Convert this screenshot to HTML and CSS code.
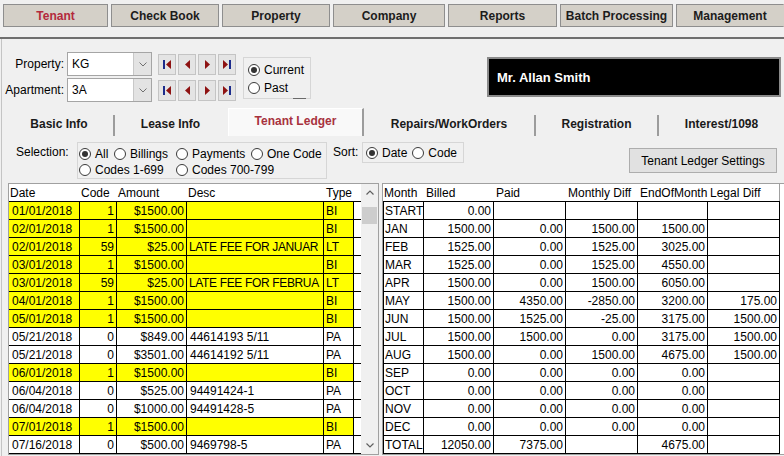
FILE: index.html
```html
<!DOCTYPE html>
<html>
<head>
<meta charset="utf-8">
<title>Tenant Ledger</title>
<link rel="stylesheet" href="styles.css">
</head>
<body>
<nav class="topnav">
  <div class="nb nb-active">Tenant</div>
  <div class="nb">Check Book</div>
  <div class="nb">Property</div>
  <div class="nb">Company</div>
  <div class="nb">Reports</div>
  <div class="nb">Batch Processing</div>
  <div class="nb nb-last">Management</div>
</nav>
<div class="main">
  <div class="head">
    <div class="fields">
      <div class="frow">
        <span class="flabel">Property:</span>
        <div class="combo"><span class="combo-val">KG</span><span class="combo-btn"><svg width="8" height="5" viewBox="0 0 8 5"><path d="M0.5 0.5 L4 4 L7.5 0.5" fill="none" stroke="#707070" stroke-width="1"/></svg></span></div>
        <div class="navbtns">
          <span class="nav"><svg width="8" height="9" viewBox="0 0 8 9"><rect width="2" height="9" fill="#1c2c8c"/><path d="M8 0V9L3 4.5Z" fill="#8e1212"/></svg></span>
          <span class="nav"><svg width="5" height="9" viewBox="0 0 5 9"><path d="M5 0V9L0 4.5Z" fill="#8e1212"/></svg></span>
          <span class="nav"><svg width="5" height="9" viewBox="0 0 5 9"><path d="M0 0V9L5 4.5Z" fill="#8e1212"/></svg></span>
          <span class="nav"><svg width="8" height="9" viewBox="0 0 8 9"><path d="M0 0V9L5 4.5Z" fill="#8e1212"/><rect x="6" width="2" height="9" fill="#1c2c8c"/></svg></span>
        </div>
      </div>
      <div class="frow">
        <span class="flabel">Apartment:</span>
        <div class="combo"><span class="combo-val">3A</span><span class="combo-btn"><svg width="8" height="5" viewBox="0 0 8 5"><path d="M0.5 0.5 L4 4 L7.5 0.5" fill="none" stroke="#707070" stroke-width="1"/></svg></span></div>
        <div class="navbtns">
          <span class="nav"><svg width="8" height="9" viewBox="0 0 8 9"><rect width="2" height="9" fill="#1c2c8c"/><path d="M8 0V9L3 4.5Z" fill="#8e1212"/></svg></span>
          <span class="nav"><svg width="5" height="9" viewBox="0 0 5 9"><path d="M5 0V9L0 4.5Z" fill="#8e1212"/></svg></span>
          <span class="nav"><svg width="5" height="9" viewBox="0 0 5 9"><path d="M0 0V9L5 4.5Z" fill="#8e1212"/></svg></span>
          <span class="nav"><svg width="8" height="9" viewBox="0 0 8 9"><path d="M0 0V9L5 4.5Z" fill="#8e1212"/><rect x="6" width="2" height="9" fill="#1c2c8c"/></svg></span>
        </div>
      </div>
    </div>
    <div class="cbox">
      <div class="ritem"><span class="radio on"></span>Current</div>
      <div class="ritem"><span class="radio"></span>Past</div>
    </div>
    <div class="namebox">Mr. Allan Smith</div>
  </div>

  <div class="tabs">
    <div class="tab t-basic">Basic Info</div>
    <div class="tab t-lease t-noline">Lease Info</div>
    <div class="tab t-ledger tab-active">Tenant Ledger</div>
    <div class="tab t-repairs">Repairs/WorkOrders</div>
    <div class="tab t-reg">Registration</div>
    <div class="tab t-int">Interest/1098</div>
  </div>

  <div class="filters">
    <span class="sel-label">Selection:</span>
    <div class="selbox">
      <div class="ritem"><span class="radio on"></span>All</div>
      <div class="ritem"><span class="radio"></span>Billings</div>
      <div class="ritem"><span class="radio"></span>Payments</div>
      <div class="ritem"><span class="radio"></span>One Code</div>
      <div class="ritem span2"><span class="radio"></span>Codes 1-699</div>
      <div class="ritem span2"><span class="radio"></span>Codes 700-799</div>
    </div>
    <span class="sort-label">Sort:</span>
    <div class="sortbox">
      <div class="ritem"><span class="radio on"></span>Date</div>
      <div class="ritem"><span class="radio"></span>Code</div>
    </div>
    <div class="settings">Tenant Ledger Settings</div>
  </div>

  <div class="tables">
    <div class="lbox">
      <div class="lgrid">
        <div class="lhdr">
          <span class="h c1">Date</span><span class="h c2">Code</span><span class="h c3">Amount</span><span class="h c4">Desc</span><span class="h c5">Type</span><span class="h c6"></span>
        </div>
        <div class="lrow y"><span class="c c1">01/01/2018</span><span class="c c2 r">1</span><span class="c c3 r">$1500.00</span><span class="c c4"></span><span class="c c5">BI</span><span class="c c6"></span></div>
        <div class="lrow y"><span class="c c1">02/01/2018</span><span class="c c2 r">1</span><span class="c c3 r">$1500.00</span><span class="c c4"></span><span class="c c5">BI</span><span class="c c6"></span></div>
        <div class="lrow y"><span class="c c1">02/01/2018</span><span class="c c2 r">59</span><span class="c c3 r">$25.00</span><span class="c c4 tight">LATE FEE FOR JANUAR</span><span class="c c5">LT</span><span class="c c6"></span></div>
        <div class="lrow y"><span class="c c1">03/01/2018</span><span class="c c2 r">1</span><span class="c c3 r">$1500.00</span><span class="c c4"></span><span class="c c5">BI</span><span class="c c6"></span></div>
        <div class="lrow y"><span class="c c1">03/01/2018</span><span class="c c2 r">59</span><span class="c c3 r">$25.00</span><span class="c c4 tight">LATE FEE FOR FEBRUA</span><span class="c c5">LT</span><span class="c c6"></span></div>
        <div class="lrow y"><span class="c c1">04/01/2018</span><span class="c c2 r">1</span><span class="c c3 r">$1500.00</span><span class="c c4"></span><span class="c c5">BI</span><span class="c c6"></span></div>
        <div class="lrow y"><span class="c c1">05/01/2018</span><span class="c c2 r">1</span><span class="c c3 r">$1500.00</span><span class="c c4"></span><span class="c c5">BI</span><span class="c c6"></span></div>
        <div class="lrow"><span class="c c1">05/21/2018</span><span class="c c2 r">0</span><span class="c c3 r">$849.00</span><span class="c c4">44614193 5/11</span><span class="c c5">PA</span><span class="c c6"></span></div>
        <div class="lrow"><span class="c c1">05/21/2018</span><span class="c c2 r">0</span><span class="c c3 r">$3501.00</span><span class="c c4">44614192 5/11</span><span class="c c5">PA</span><span class="c c6"></span></div>
        <div class="lrow y"><span class="c c1">06/01/2018</span><span class="c c2 r">1</span><span class="c c3 r">$1500.00</span><span class="c c4"></span><span class="c c5">BI</span><span class="c c6"></span></div>
        <div class="lrow"><span class="c c1">06/04/2018</span><span class="c c2 r">0</span><span class="c c3 r">$525.00</span><span class="c c4">94491424-1</span><span class="c c5">PA</span><span class="c c6"></span></div>
        <div class="lrow"><span class="c c1">06/04/2018</span><span class="c c2 r">0</span><span class="c c3 r">$1000.00</span><span class="c c4">94491428-5</span><span class="c c5">PA</span><span class="c c6"></span></div>
        <div class="lrow y"><span class="c c1">07/01/2018</span><span class="c c2 r">1</span><span class="c c3 r">$1500.00</span><span class="c c4"></span><span class="c c5">BI</span><span class="c c6"></span></div>
        <div class="lrow"><span class="c c1">07/16/2018</span><span class="c c2 r">0</span><span class="c c3 r">$500.00</span><span class="c c4">9469798-5</span><span class="c c5">PA</span><span class="c c6"></span></div>
      </div>
      <div class="lscroll">
        <div class="sb-btn"><svg width="8" height="5" viewBox="0 0 8 5"><path d="M0.5 4.5 L4 1 L7.5 4.5" fill="none" stroke="#606060" stroke-width="1.2"/></svg></div>
        <div class="sb-track"><div class="sb-thumb"></div></div>
        <div class="sb-btn"><svg width="8" height="5" viewBox="0 0 8 5"><path d="M0.5 0.5 L4 4 L7.5 0.5" fill="none" stroke="#606060" stroke-width="1.2"/></svg></div>
      </div>
    </div>

    <div class="rbox">
      <div class="rhdr">
        <span class="h m1">Month</span><span class="h m2">Billed</span><span class="h m3">Paid</span><span class="h m4">Monthly Diff</span><span class="h m5">EndOfMonth</span><span class="h m6 hlast">Legal Diff</span>
      </div>
      <div class="rrow"><span class="c m1">START</span><span class="c m2 r">0.00</span><span class="c m3 r"></span><span class="c m4 r"></span><span class="c m5 r"></span><span class="c m6 r"></span></div>
      <div class="rrow"><span class="c m1">JAN</span><span class="c m2 r">1500.00</span><span class="c m3 r">0.00</span><span class="c m4 r">1500.00</span><span class="c m5 r">1500.00</span><span class="c m6 r"></span></div>
      <div class="rrow"><span class="c m1">FEB</span><span class="c m2 r">1525.00</span><span class="c m3 r">0.00</span><span class="c m4 r">1525.00</span><span class="c m5 r">3025.00</span><span class="c m6 r"></span></div>
      <div class="rrow"><span class="c m1">MAR</span><span class="c m2 r">1525.00</span><span class="c m3 r">0.00</span><span class="c m4 r">1525.00</span><span class="c m5 r">4550.00</span><span class="c m6 r"></span></div>
      <div class="rrow"><span class="c m1">APR</span><span class="c m2 r">1500.00</span><span class="c m3 r">0.00</span><span class="c m4 r">1500.00</span><span class="c m5 r">6050.00</span><span class="c m6 r"></span></div>
      <div class="rrow"><span class="c m1">MAY</span><span class="c m2 r">1500.00</span><span class="c m3 r">4350.00</span><span class="c m4 r">-2850.00</span><span class="c m5 r">3200.00</span><span class="c m6 r">175.00</span></div>
      <div class="rrow"><span class="c m1">JUN</span><span class="c m2 r">1500.00</span><span class="c m3 r">1525.00</span><span class="c m4 r">-25.00</span><span class="c m5 r">3175.00</span><span class="c m6 r">1500.00</span></div>
      <div class="rrow"><span class="c m1">JUL</span><span class="c m2 r">1500.00</span><span class="c m3 r">1500.00</span><span class="c m4 r">0.00</span><span class="c m5 r">3175.00</span><span class="c m6 r">1500.00</span></div>
      <div class="rrow"><span class="c m1">AUG</span><span class="c m2 r">1500.00</span><span class="c m3 r">0.00</span><span class="c m4 r">1500.00</span><span class="c m5 r">4675.00</span><span class="c m6 r">1500.00</span></div>
      <div class="rrow"><span class="c m1">SEP</span><span class="c m2 r">0.00</span><span class="c m3 r">0.00</span><span class="c m4 r">0.00</span><span class="c m5 r">0.00</span><span class="c m6 r"></span></div>
      <div class="rrow"><span class="c m1">OCT</span><span class="c m2 r">0.00</span><span class="c m3 r">0.00</span><span class="c m4 r">0.00</span><span class="c m5 r">0.00</span><span class="c m6 r"></span></div>
      <div class="rrow"><span class="c m1">NOV</span><span class="c m2 r">0.00</span><span class="c m3 r">0.00</span><span class="c m4 r">0.00</span><span class="c m5 r">0.00</span><span class="c m6 r"></span></div>
      <div class="rrow"><span class="c m1">DEC</span><span class="c m2 r">0.00</span><span class="c m3 r">0.00</span><span class="c m4 r">0.00</span><span class="c m5 r">0.00</span><span class="c m6 r"></span></div>
      <div class="rrow"><span class="c m1">TOTAL</span><span class="c m2 r">12050.00</span><span class="c m3 r">7375.00</span><span class="c m4 r"></span><span class="c m5 r">4675.00</span><span class="c m6 r"></span></div>
    </div>
  </div>
</div>
</body>
</html>
```

FILE: styles.css
```css
* { box-sizing: border-box; }
html, body { margin: 0; padding: 0; }
body {
  width: 784px;
  height: 456px;
  overflow: hidden;
  background: #f0f0f0;
  font-family: "Liberation Sans", Arial, sans-serif;
  font-size: 12px;
  color: #000;
}

/* top navigation */
.topnav {
  height: 39px;
  border-bottom: 2px solid #6f6f6f;
  display: grid;
  grid-template-columns: 105px 108px 108px 112px 109px 113px 108px;
  column-gap: 3px;
  padding: 4px 0 0 3px;
  align-items: start;
  background: #f0f0f0;
}
.nb {
  height: 23px;
  background: #d4d0c8;
  border: 1px solid #8e8e8e;
  font-weight: bold;
  color: #1c1c1c;
  display: flex;
  align-items: center;
  justify-content: center;
  white-space: nowrap;
}
.nb-active { color: #b3293c; }
.nb-last { border-right-color: transparent; }

/* main panel */
.main {
  margin-left: 1px;
  border-left: 1px solid #c4c4c4;
  height: 417px;
}

.head {
  display: flex;
  align-items: flex-start;
  height: 69px;
  padding-top: 13px;
}
.fields { display: flex; flex-direction: column; gap: 2px; }
.frow { display: flex; align-items: center; height: 24px; }
.flabel { width: 62px; text-align: right; white-space: nowrap; }
.combo {
  margin-left: 3px;
  width: 85px;
  height: 24px;
  border: 1px solid #a5a5a5;
  background: #fff;
  display: flex;
}
.combo-val { flex: 1; padding-left: 4px; line-height: 22px; }
.combo-btn {
  width: 18px;
  background: #e3e3e3;
  border-left: 1px solid #c8c8c8;
  display: flex;
  align-items: center;
  justify-content: center;
}
.navbtns { display: flex; gap: 2px; margin-left: 6px; }
.nav {
  width: 18px;
  height: 21px;
  background: #e4e4e4;
  border: 1px solid #c4c4c4;
  display: flex;
  align-items: center;
  justify-content: center;
}

.cbox {
  position: relative;
  margin-left: 7px;
  margin-top: 5px;
  width: 68px;
  height: 42px;
  border: 1px solid #d6d6d6;
  padding: 3px 0 0 4px;
}
.cbox::after {
  content: "";
  position: absolute;
  left: 49px;
  bottom: -1px;
  width: 13px;
  height: 1px;
  background: #6a6a6a;
}

.ritem { display: flex; align-items: center; height: 18px; white-space: nowrap; }
.radio {
  position: relative;
  flex: none;
  width: 12px;
  height: 12px;
  border: 1px solid #3a3a3a;
  border-radius: 50%;
  background: #fff;
  margin-right: 4px;
}
.radio.on::after {
  content: "";
  position: absolute;
  left: 2px;
  top: 2px;
  width: 6px;
  height: 6px;
  border-radius: 50%;
  background: #333;
}

.namebox {
  margin-left: auto;
  margin-right: 3px;
  margin-top: 5px;
  width: 294px;
  height: 40px;
  background: #000;
  border: 2px solid #8a8a8a;
  color: #fff;
  font-weight: bold;
  font-size: 13px;
  padding-left: 8px;
  display: flex;
  align-items: center;
}

/* tabs */
.tabs {
  display: flex;
  align-items: flex-end;
  height: 28px;
  padding-left: 3px;
}
.tab {
  height: 21px;
  padding-bottom: 3px;
  display: flex;
  align-items: center;
  justify-content: center;
  font-weight: bold;
  color: #1a1a1a;
  border-right: 2px solid #9c9c9c;
  white-space: nowrap;
}
.t-noline { border-right-color: transparent; }
.tab-active {
  height: 28px;
  padding-bottom: 4px;
  background: #f9f9f9;
  border-left: 1px solid #ffffff;
  border-top: 1px solid #ffffff;
  color: #a8323e;
}
.t-basic { width: 110px; }
.t-lease { width: 113px; }
.t-ledger { width: 136px; }
.t-repairs { width: 172px; }
.t-reg { width: 123px; }
.t-int { width: 125px; border-right: none; }

/* filters */
.filters {
  display: flex;
  align-items: flex-start;
  margin-top: 6px;
  height: 37px;
}
.sel-label { margin-left: 14px; margin-top: 3px; line-height: 14px; width: 61px; }
.selbox {
  width: 250px;
  height: 37px;
  border: 1px solid #d6d6d6;
  padding: 3px 0 0 1px;
  display: grid;
  grid-template-columns: 35px 62px 75px auto;
  grid-auto-rows: 16px;
}
.selbox .ritem { height: 16px; }
.span2 { grid-column: span 2; }
.sort-label { margin-left: 6px; margin-top: 3px; line-height: 14px; width: 29px; }
.sortbox {
  height: 21px;
  border: 1px solid #d6d6d6;
  padding: 0 6px 0 3px;
  display: flex;
  align-items: center;
  gap: 5px;
}
.settings {
  margin-left: auto;
  margin-right: 7px;
  margin-top: 6px;
  width: 148px;
  height: 25px;
  background: #e1e1e1;
  border: 1px solid #adadad;
  display: flex;
  align-items: center;
  justify-content: center;
  white-space: nowrap;
}

/* tables */
.tables {
  display: flex;
  margin-top: 4px;
  padding-left: 6px;
}
.lbox {
  width: 371px;
  height: 272px;
  border: 1px solid #a0a0a0;
  background: #fff;
  display: flex;
  flex: none;
}
.lgrid { width: 352px; }
.lhdr, .rhdr { display: flex; height: 18px; border-bottom: 1px solid #000; }
.lrow, .rrow { display: flex; height: 18px; }
.h {
  padding-left: 1px;
  padding-top: 1px;
  line-height: 16px;
  white-space: nowrap;
  overflow: hidden;
}
.c {
  height: 18px;
  border-right: 1px solid #000;
  border-bottom: 1px solid #000;
  padding: 1px 3px 0 3px;
  line-height: 17px;
  white-space: nowrap;
  overflow: hidden;
}
.r { text-align: right; padding-right: 2px; }
.tight { letter-spacing: -0.35px; padding-left: 2px; padding-right: 0; }
.lrow.y .c { background: #ffff00; }
.lrow.y .c.c6 { background: #fff; }
.c1 { width: 71px; flex: none; }
.c2 { width: 37px; flex: none; }
.c3 { width: 70px; flex: none; }
.c4 { width: 137px; flex: none; }
.c5 { width: 30px; flex: none; padding-left: 2px; }
.c6 { width: 7px; flex: none; border-right: none; }

.lscroll {
  width: 17px;
  background: #f0f0f0;
  display: flex;
  flex-direction: column;
}
.sb-btn { height: 17px; display: flex; align-items: center; justify-content: center; }
.sb-track { flex: 1; padding-top: 6px; }
.sb-thumb { height: 17px; margin: 0 1px; background: #cdcdcd; }

.rbox {
  margin-left: 3px;
  width: 410px;
  flex: none;
  height: 272px;
  border: 1px solid #a0a0a0;
  background: #fff;
}
.rhdr { width: 397px; }
.rrow .m1 { border-left: 1px solid #000; padding-left: 1px; }
.rhdr .m1 { width: 41px; padding-left: 1px; }
.m1 { width: 41px; flex: none; }
.m2 { width: 70px; flex: none; }
.m3 { width: 72px; flex: none; }
.m4 { width: 72px; flex: none; }
.m5 { width: 70px; flex: none; }
.m6 { width: 72px; flex: none; }
.h.m2, .h.m3, .h.m4, .h.m5, .h.m6 { padding-left: 2px; }
.hlast { border-right: 1px solid #a0a0a0; }
```
